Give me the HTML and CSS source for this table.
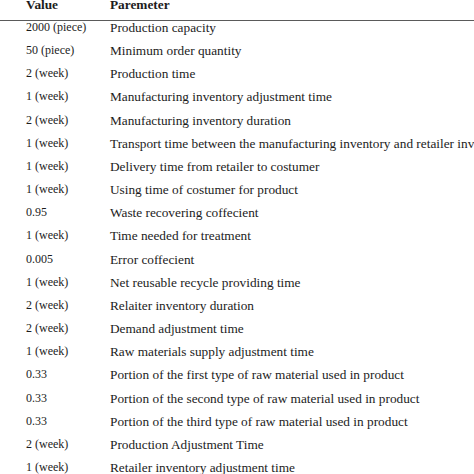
FILE: index.html
```html
<!DOCTYPE html>
<html>
<head>
<meta charset="utf-8">
<link rel="stylesheet" href="styles.css">
</head>
<body>
<div class="table">
  <div class="head">
    <div class="c-val">Value</div>
    <div class="c-par">Paremeter</div>
  </div>
  <div class="body">
    <div class="row"><div class="c-val">2000 (piece)</div><div class="c-par">Production capacity</div></div>
    <div class="row"><div class="c-val">50 (piece)</div><div class="c-par">Minimum order quantity</div></div>
    <div class="row"><div class="c-val">2 (week)</div><div class="c-par">Production time</div></div>
    <div class="row"><div class="c-val">1 (week)</div><div class="c-par">Manufacturing inventory adjustment time</div></div>
    <div class="row"><div class="c-val">2 (week)</div><div class="c-par">Manufacturing inventory duration</div></div>
    <div class="row"><div class="c-val">1 (week)</div><div class="c-par">Transport time between the manufacturing inventory and retailer inventory</div></div>
    <div class="row"><div class="c-val">1 (week)</div><div class="c-par">Delivery time from retailer to costumer</div></div>
    <div class="row"><div class="c-val">1 (week)</div><div class="c-par">Using time of costumer for product</div></div>
    <div class="row"><div class="c-val">0.95</div><div class="c-par">Waste recovering coffecient</div></div>
    <div class="row"><div class="c-val">1 (week)</div><div class="c-par">Time needed for treatment</div></div>
    <div class="row"><div class="c-val">0.005</div><div class="c-par">Error coffecient</div></div>
    <div class="row"><div class="c-val">1 (week)</div><div class="c-par">Net reusable recycle providing time</div></div>
    <div class="row"><div class="c-val">2 (week)</div><div class="c-par">Relaiter inventory duration</div></div>
    <div class="row"><div class="c-val">2 (week)</div><div class="c-par">Demand adjustment time</div></div>
    <div class="row"><div class="c-val">1 (week)</div><div class="c-par">Raw materials supply adjustment time</div></div>
    <div class="row"><div class="c-val">0.33</div><div class="c-par">Portion of the first type of raw material used in product</div></div>
    <div class="row"><div class="c-val">0.33</div><div class="c-par">Portion of the second type of raw material used in product</div></div>
    <div class="row"><div class="c-val">0.33</div><div class="c-par">Portion of the third type of raw material used in product</div></div>
    <div class="row"><div class="c-val">2 (week)</div><div class="c-par">Production Adjustment Time</div></div>
    <div class="row"><div class="c-val">1 (week)</div><div class="c-par">Retailer inventory adjustment time</div></div>
  </div>
</div>
</body>
</html>
```
FILE: styles.css
```css
html, body {
  margin: 0;
  padding: 0;
  background: #ffffff;
  overflow: hidden;
}
body {
  width: 474px;
  height: 474px;
  font-family: "Liberation Serif", "Times New Roman", serif;
  color: #1c1c1c;
}
.table {
  display: flex;
  flex-direction: column;
  white-space: nowrap;
}
.head {
  display: flex;
  align-items: flex-start;
  height: 20px;
  border-bottom: 1.5px solid #5a5a5a;
  font-weight: bold;
  font-size: 13.3px;
  line-height: 13px;
  padding-left: 26px;
}
.head .c-val {
  margin-top: -2px;
}
.head .c-par {
  margin-top: -2px;
}
.c-val {
  width: 84px;
  flex: none;
}
.c-par {
  flex: none;
}
.body {
  display: flex;
  flex-direction: column;
}
.row {
  display: flex;
  align-items: flex-start;
  height: 23.17px;
  line-height: 13px;
  padding-left: 26px;
}
.row .c-val {
  font-size: 12px;
}
.row .c-par {
  font-size: 13.3px;
}
```
